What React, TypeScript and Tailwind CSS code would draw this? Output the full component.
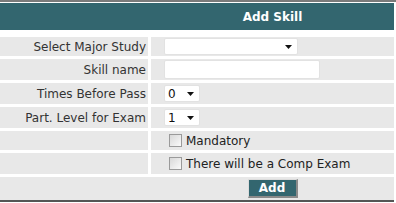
import React from 'react'

function Select({ value, width }: { value: string; width: string }) {
  return (
    <div className={`${width} h-[17px] bg-white border border-[#e2e2e2] rounded-[2px] flex items-center justify-between pl-[3px] pr-[5px]`}>
      <span className="text-[12px] leading-none text-[#111]">{value}</span>
      <svg width="7" height="4" viewBox="0 0 7 4">
        <path d="M0 0 H7 L3.5 4 Z" fill="#111" />
      </svg>
    </div>
  )
}

function Check({ label }: { label: string }) {
  return (
    <div className="flex items-center ml-[5px]">
      <span className="w-[13px] h-[13px] border border-[#9a9a9a] bg-gradient-to-br from-[#d8d8d8] to-[#fafafa] mr-[4px]" />
      <span className="text-[#222]">{label}</span>
    </div>
  )
}

export default function App() {
  const rows: { label: string; h: string; content: React.ReactNode }[] = [
    { label: 'Select Major Study', h: 'h-[19px]', content: <Select value="" width="w-[134px]" /> },
    {
      label: 'Skill name',
      h: 'h-[21px]',
      content: <div className="w-[156px] h-[19px] bg-white border border-[#e2e2e2] rounded-[2px]" />,
    },
    { label: 'Times Before Pass', h: 'h-[21px]', content: <Select value="0" width="w-[36px]" /> },
    { label: 'Part. Level for Exam', h: 'h-[21px]', content: <Select value="1" width="w-[36px]" /> },
    { label: '', h: 'h-[19px]', content: <Check label="Mandatory" /> },
    { label: '', h: 'h-[21px]', content: <Check label="There will be a Comp Exam" /> },
  ]

  return (
    <div className="w-[396px] h-[203px] bg-white font-['DejaVu_Sans',sans-serif] text-[12px] text-[#333]">
      <div className="border-t-2 border-[#7b7b7b] pt-px pr-[2px]">
        <div className="h-[27px] bg-[#33666f] flex">
          <div className="w-[151px]" />
          <div className="flex-1 flex items-center justify-center font-bold text-white">Add Skill</div>
        </div>
        <div className="flex flex-col gap-[3px] mt-[7px]">
          {rows.map((r, i) => (
            <div key={i} className={`flex gap-[3px] ${r.h}`}>
              <div className="w-[148px] bg-[#e8e8e8] flex items-center justify-end pr-[2px]">{r.label}</div>
              <div className="flex-1 bg-[#e8e8e8] flex items-center pl-[13px]">{r.content}</div>
            </div>
          ))}
          <div className="h-[23px] bg-[#e8e8e8] flex">
            <div className="w-[151px]" />
            <div className="flex-1 flex items-center justify-center">
              <button className="w-[50px] h-[19px] bg-[#33666f] text-white font-bold text-[12px] leading-none border-t border-l border-[#dcdcdc] border-r-2 border-b-2 border-r-[#8a8a8a] border-b-[#8a8a8a]">
                Add
              </button>
            </div>
          </div>
        </div>
        <div className="h-[2px] bg-[#555]" />
      </div>
    </div>
  )
}
